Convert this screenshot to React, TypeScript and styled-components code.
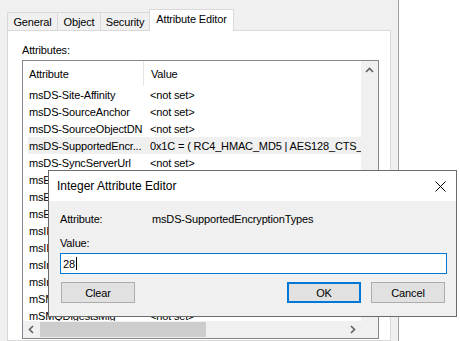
import React from "react";
import styled, { createGlobalStyle } from "styled-components";

const GlobalStyle = createGlobalStyle`
  html, body {
    margin: 0;
    padding: 0;
    background: #ffffff;
  }
  body {
    font-family: "Liberation Sans", Arial, sans-serif;
    font-size: 11px;
    letter-spacing: -0.15px;
    color: #000000;
  }
`;

const Screen = styled.div`
  position: relative;
  width: 460px;
  height: 341px;
  overflow: hidden;
  background: #ffffff;
`;

const PropertyWindow = styled.div`
  width: 399px;
  height: 341px;
  box-sizing: border-box;
  padding: 9px 0 0 7px;
  background: #f0f0f0;
  border-right: 1px solid #a0a0a0;
  display: flex;
  flex-direction: column;
`;

const TabStrip = styled.div`
  display: flex;
  align-items: flex-end;
  height: 21px;
  position: relative;
  z-index: 1;
`;

const Tab = styled.div<{ $width: number; $active?: boolean }>`
  box-sizing: border-box;
  width: ${({ $width }) => $width}px;
  height: ${({ $active }) => ($active ? 22 : 18)}px;
  margin-bottom: ${({ $active }) => ($active ? -1 : 0)}px;
  background: ${({ $active }) => ($active ? "#ffffff" : "#f0f0f0")};
  border-top: 1px solid #d9d9d9;
  border-left: 1px solid #d9d9d9;
  border-right: ${({ $active }) => ($active ? "1px solid #d9d9d9" : "none")};
  display: flex;
  align-items: center;
  justify-content: center;
  padding-bottom: ${({ $active }) => ($active ? 3 : 0)}px;
  white-space: nowrap;
`;

const TabPanel = styled.div`
  box-sizing: border-box;
  width: 384px;
  flex: 1;
  background: #ffffff;
  border: 1px solid #d9d9d9;
  padding: 12px 0 0 14px;
`;

const FieldLabel = styled.div`
  height: 14px;
  line-height: 14px;
  margin-bottom: 3px;
`;

const ListBox = styled.div`
  box-sizing: border-box;
  width: 357px;
  height: 279px;
  border: 1px solid #828790;
  display: grid;
  grid-template-columns: 338px 17px;
  grid-template-rows: 260px 17px;
`;

const ListContent = styled.div`
  overflow: hidden;
  display: flex;
  flex-direction: column;
`;

const HeaderRow = styled.div`
  display: flex;
  height: 25px;
  flex-shrink: 0;
`;

const HeaderCell = styled.div<{ $width?: number; $divider?: boolean }>`
  box-sizing: border-box;
  width: ${({ $width }) => ($width ? `${$width}px` : "auto")};
  flex: ${({ $width }) => ($width ? "none" : 1)};
  padding-left: ${({ $divider }) => ($divider ? 6 : 7)}px;
  border-right: ${({ $divider }) => ($divider ? "1px solid #e5e5e5" : "none")};
  display: flex;
  align-items: center;
`;

const Row = styled.div<{ $selected?: boolean }>`
  display: flex;
  height: 17px;
  flex-shrink: 0;
  margin-left: 5px;
  padding-left: 1px;
  background: ${({ $selected }) => ($selected ? "#f0f0f0" : "transparent")};
  align-items: center;
  white-space: nowrap;
  overflow: hidden;
`;

const NameCell = styled.div`
  width: 121px;
  flex: none;
  overflow: hidden;
`;

const ValueCell = styled.div`
  flex: 1;
  overflow: hidden;
`;

const ScrollTrack = styled.div<{ $horizontal?: boolean }>`
  background: #f0f0f0;
  display: flex;
  flex-direction: ${({ $horizontal }) => ($horizontal ? "row" : "column")};
  align-items: stretch;
`;

const ScrollArrow = styled.div`
  width: 17px;
  height: 17px;
  flex: none;
  display: flex;
  align-items: center;
  justify-content: center;
`;

const HThumb = styled.div`
  width: 166px;
  margin: 1px 0;
  background: #cdcdcd;
`;

const Spacer = styled.div`
  flex: 1;
`;

const Corner = styled.div`
  background: #f0f0f0;
`;

const Dialog = styled.div`
  position: absolute;
  left: 48px;
  top: 170px;
  width: 409px;
  height: 147px;
  box-sizing: border-box;
  border: 1px solid #6b6b6b;
  background: #f0f0f0;
  display: flex;
  flex-direction: column;
  z-index: 2;
`;

const TitleBar = styled.div`
  height: 30px;
  flex: none;
  background: #ffffff;
  display: flex;
  align-items: center;
  justify-content: space-between;
  padding: 0 10px 0 8px;
  font-size: 12px;
  letter-spacing: 0;
`;

const DialogBody = styled.div`
  padding: 11px 9px 0 11px;
  display: flex;
  flex-direction: column;
`;

const InfoRow = styled.div`
  display: flex;
  height: 14px;
  line-height: 14px;
  margin-bottom: 10px;
`;

const InfoLabel = styled.div`
  width: 92px;
`;

const ValueLabel = styled.div`
  height: 14px;
  line-height: 14px;
  margin-bottom: 3px;
`;

const TextBox = styled.div`
  box-sizing: border-box;
  height: 21px;
  width: 387px;
  border: 1px solid #0078d7;
  background: #ffffff;
  display: flex;
  align-items: center;
  padding-left: 2px;
  margin-bottom: 8px;
`;

const Caret = styled.span`
  display: inline-block;
  width: 1px;
  height: 13px;
  background: #000000;
  margin-left: 1px;
`;

const ButtonRow = styled.div`
  display: flex;
  justify-content: space-between;
  padding: 0 2px 0 1px;
`;

const ButtonGroup = styled.div`
  display: flex;
  gap: 10px;
`;

const Button = styled.div<{ $default?: boolean }>`
  box-sizing: border-box;
  width: 74px;
  height: 21px;
  background: #e1e1e1;
  border: ${({ $default }) => ($default ? "2px solid #0078d7" : "1px solid #adadad")};
  display: flex;
  align-items: center;
  justify-content: center;
`;

const Chevron = ({ dir }: { dir: "up" | "left" | "right" }) => {
  const paths = {
    up: "M1 5 L4.5 1.5 L8 5",
    left: "M5 1 L1.5 4.5 L5 8",
    right: "M2 1 L5.5 4.5 L2 8",
  };
  const size = dir === "up" ? { w: 9, h: 6 } : { w: 7, h: 9 };
  return (
    <svg width={size.w} height={size.h} viewBox={`0 0 ${size.w} ${size.h}`}>
      <path d={paths[dir]} fill="none" stroke="#606060" strokeWidth="1.6" />
    </svg>
  );
};

const rows: [string, string][] = [
  ["msDS-Site-Affinity", "<not set>"],
  ["msDS-SourceAnchor", "<not set>"],
  ["msDS-SourceObjectDN", "<not set>"],
  ["msDS-SupportedEncr...", "0x1C = ( RC4_HMAC_MD5 | AES128_CTS_HMAC_SHA1_96 | AES256_CTS_HMAC_SHA1_96 )"],
  ["msDS-SyncServerUrl", "<not set>"],
  ["msExchAssistantName", "<not set>"],
  ["msExchHouseIdentifier", "<not set>"],
  ["msExchLabeledURI", "<not set>"],
  ["msIIS-FTPDir", "<not set>"],
  ["msIIS-FTPRoot", "<not set>"],
  ["msImaging-HashAlgorithm", "<not set>"],
  ["msImaging-ThumbprintHash", "<not set>"],
  ["mSMQDigests", "<not set>"],
  ["mSMQDigestsMig", "<not set>"],
];

export default function App() {
  return (
    <>
      <GlobalStyle />
      <Screen>
        <PropertyWindow>
          <TabStrip>
            <Tab $width={50}>General</Tab>
            <Tab $width={43}>Object</Tab>
            <Tab $width={49}>Security</Tab>
            <Tab $width={85} $active>Attribute Editor</Tab>
          </TabStrip>
          <TabPanel>
            <FieldLabel>Attributes:</FieldLabel>
            <ListBox>
              <ListContent>
                <HeaderRow>
                  <HeaderCell $width={121} $divider>Attribute</HeaderCell>
                  <HeaderCell>Value</HeaderCell>
                </HeaderRow>
                {rows.map(([name, value], i) => (
                  <Row key={name} $selected={i === 3}>
                    <NameCell>{name}</NameCell>
                    <ValueCell>{value}</ValueCell>
                  </Row>
                ))}
              </ListContent>
              <ScrollTrack>
                <ScrollArrow>
                  <Chevron dir="up" />
                </ScrollArrow>
              </ScrollTrack>
              <ScrollTrack $horizontal>
                <ScrollArrow>
                  <Chevron dir="left" />
                </ScrollArrow>
                <HThumb />
                <Spacer />
                <ScrollArrow>
                  <Chevron dir="right" />
                </ScrollArrow>
              </ScrollTrack>
              <Corner />
            </ListBox>
          </TabPanel>
        </PropertyWindow>

        <Dialog>
          <TitleBar>
            <span>Integer Attribute Editor</span>
            <svg width="11" height="11" viewBox="0 0 11 11">
              <path d="M0.5 0.5 L10.5 10.5 M10.5 0.5 L0.5 10.5" stroke="#000" strokeWidth="1" />
            </svg>
          </TitleBar>
          <DialogBody>
            <InfoRow>
              <InfoLabel>Attribute:</InfoLabel>
              <span>msDS-SupportedEncryptionTypes</span>
            </InfoRow>
            <ValueLabel>Value:</ValueLabel>
            <TextBox>
              28
              <Caret />
            </TextBox>
            <ButtonRow>
              <Button>Clear</Button>
              <ButtonGroup>
                <Button $default>OK</Button>
                <Button>Cancel</Button>
              </ButtonGroup>
            </ButtonRow>
          </DialogBody>
        </Dialog>
      </Screen>
    </>
  );
}
